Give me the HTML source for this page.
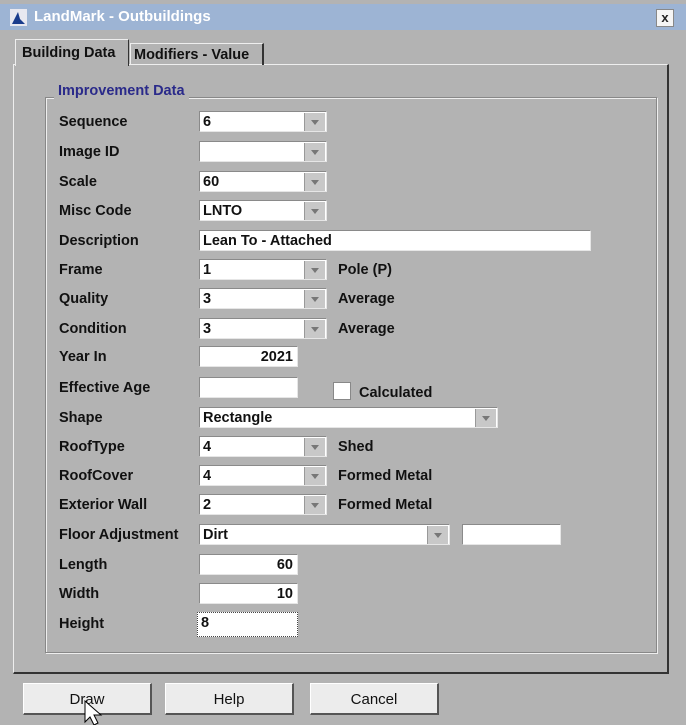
<html><head><style>
body{margin:0;width:686px;height:725px;background:#b3b3b3;font-family:"Liberation Sans",sans-serif;position:relative;overflow:hidden;font-weight:bold;font-size:14.5px;color:#111}
.a{position:absolute}
.title{left:0;top:4px;width:686px;height:26px;background:#9db4d4;color:#fff;font-size:15px;line-height:26px}
.f{position:absolute;background:#fff;border:1px solid #8a8a8a;border-right-color:#e6e6e6;border-bottom-color:#e6e6e6;height:21px;line-height:21px;padding-left:3px;box-sizing:border-box;font-size:14.5px}
.dd{position:absolute;right:1px;top:1px;width:20px;height:18px;background:#c8c8c8;border-left:1px solid #999}
.dd:after{content:"";position:absolute;left:6px;top:7px;border-left:4px solid transparent;border-right:4px solid transparent;border-top:5px solid #777}
.l{position:absolute;left:59px}
.btn{position:absolute;top:683px;height:32px;background:#ececec;border:1px solid #fff;border-right:2px solid #555;border-bottom:2px solid #555;text-align:center;line-height:32px;font-weight:normal;font-size:15px;box-sizing:border-box}
</style></head><body>
<div class="a title"><svg class="a" style="left:10px;top:5px" width="17" height="17"><rect width="17" height="17" fill="#e8e8f0"/><path d="M2 15 L8 3 L10 10 L15 15Z" fill="#1a3c8c"/></svg><span class="a" style="left:34px">LandMark - Outbuildings</span>
<div class="a" style="left:656px;top:5px;width:16px;height:16px;background:#f5f5f5;border:1px solid #888;color:#222;font-size:13px;line-height:16px;text-align:center">x</div></div>
<div class="a" style="left:13px;top:64px;width:656px;height:610px;border:1px solid #eee;border-right:2px solid #333;border-bottom:2px solid #333;box-sizing:border-box"></div>
<div class="a" style="left:15px;top:39px;width:114px;height:27px;background:#b3b3b3;border:1px solid #eee;border-bottom:none;border-right:1px solid #333;line-height:27px;padding-left:6px;box-sizing:border-box">Building Data</div>
<div class="a" style="left:130px;top:43px;width:134px;height:22px;border:1px solid #eee;border-bottom:none;border-right:2px solid #333;line-height:22px;padding-left:3px;box-sizing:border-box">Modifiers - Value</div>
<div class="a" style="left:45px;top:97px;width:610px;height:554px;border:1px solid #888;box-shadow:1px 1px 0 #eee,inset 1px 1px 0 #eee"></div>
<div class="a" style="left:54px;top:83px;padding:0 4px;background:#b3b3b3;color:#2a2a8a">Improvement Data</div>

<div class="l" style="top:114px">Sequence</div><div class="f" style="left:199px;top:111px;width:128px">6<div class="dd"></div></div>
<div class="l" style="top:144px">Image ID</div><div class="f" style="left:199px;top:141px;width:128px"><div class="dd"></div></div>
<div class="l" style="top:174px">Scale</div><div class="f" style="left:199px;top:171px;width:128px">60<div class="dd"></div></div>
<div class="l" style="top:203px">Misc Code</div><div class="f" style="left:199px;top:200px;width:128px">LNTO<div class="dd"></div></div>
<div class="l" style="top:233px">Description</div><div class="f" style="left:199px;top:230px;width:392px">Lean To - Attached</div>
<div class="l" style="top:262px">Frame</div><div class="f" style="left:199px;top:259px;width:128px">1<div class="dd"></div></div><div class="a" style="left:338px;top:262px">Pole (P)</div>
<div class="l" style="top:291px">Quality</div><div class="f" style="left:199px;top:288px;width:128px">3<div class="dd"></div></div><div class="a" style="left:338px;top:291px">Average</div>
<div class="l" style="top:321px">Condition</div><div class="f" style="left:199px;top:318px;width:128px">3<div class="dd"></div></div><div class="a" style="left:338px;top:321px">Average</div>
<div class="l" style="top:349px">Year In</div><div class="f" style="left:199px;top:346px;width:99px;text-align:right;padding-right:4px">2021</div>
<div class="l" style="top:380px">Effective Age</div><div class="f" style="left:199px;top:377px;width:99px"></div>
<div class="a" style="left:333px;top:382px;width:18px;height:18px;background:#fff;border:1px solid #888;box-sizing:border-box"></div><div class="a" style="left:359px;top:385px">Calculated</div>
<div class="l" style="top:410px">Shape</div><div class="f" style="left:199px;top:407px;width:299px">Rectangle<div class="dd"></div></div>
<div class="l" style="top:439px">RoofType</div><div class="f" style="left:199px;top:436px;width:128px">4<div class="dd"></div></div><div class="a" style="left:338px;top:439px">Shed</div>
<div class="l" style="top:468px">RoofCover</div><div class="f" style="left:199px;top:465px;width:128px">4<div class="dd"></div></div><div class="a" style="left:338px;top:468px">Formed Metal</div>
<div class="l" style="top:497px">Exterior Wall</div><div class="f" style="left:199px;top:494px;width:128px">2<div class="dd"></div></div><div class="a" style="left:338px;top:497px">Formed Metal</div>
<div class="l" style="top:527px">Floor Adjustment</div><div class="f" style="left:199px;top:524px;width:251px">Dirt<div class="dd"></div></div><div class="f" style="left:462px;top:524px;width:99px"></div>
<div class="l" style="top:557px">Length</div><div class="f" style="left:199px;top:554px;width:99px;text-align:right;padding-right:4px">60</div>
<div class="l" style="top:586px">Width</div><div class="f" style="left:199px;top:583px;width:99px;text-align:right;padding-right:4px">10</div>
<div class="l" style="top:616px">Height</div><div class="f" style="left:197px;top:612px;width:101px;height:25px;border:1px dotted #444">8</div>

<div class="btn" style="left:23px;width:129px">Draw</div>
<div class="btn" style="left:165px;width:129px">Help</div>
<div class="btn" style="left:310px;width:129px">Cancel</div>
<svg class="a" style="left:84px;top:700px" width="24" height="25"><path d="M1 1 L1 22 L6 17 L10 25 L14 23 L10 15 L17 15Z" fill="#fff" stroke="#000"/></svg>
</body></html>
